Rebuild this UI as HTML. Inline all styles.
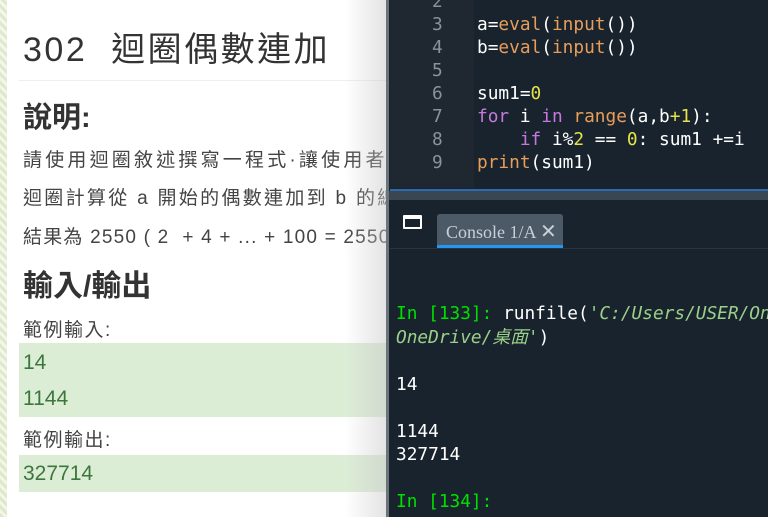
<!DOCTYPE html>
<html><head><meta charset="utf-8"><style>
*{margin:0;padding:0;box-sizing:border-box}
body{width:768px;height:517px;overflow:hidden;position:relative;background:#fff;font-family:"Liberation Sans","Noto Sans CJK TC",sans-serif}
.stripe{position:absolute;left:0;top:0;width:7px;height:517px;background:repeating-linear-gradient(45deg,#dfe8c8 0 3px,#f3f6ea 3px 6px);}
.t{position:absolute;white-space:nowrap;overflow:hidden}
.shadow{position:absolute;left:345px;top:0;width:41px;height:517px;background:linear-gradient(90deg,rgba(255,255,255,0),rgba(200,200,200,.5));}
.green{position:absolute;left:19px;width:367px;background:#dcedd6}
.right{position:absolute;left:386px;top:0;width:382px;height:517px;background:#19232d}
.mono{font-family:"DejaVu Sans Mono","Liberation Mono",monospace;font-size:17.8px;white-space:pre;position:absolute}
</style></head><body>
<div class="stripe"></div>
<div class="t" style="left:23px;top:22px;font-size:34px;color:#333;letter-spacing:2.5px">302&nbsp; 迴圈偶數連加</div>
<div style="position:absolute;left:19px;top:80px;width:367px;height:1px;background:#eee"></div>
<div class="t" style="left:23px;top:94px;font-size:29px;font-weight:bold;color:#333">說明:</div>
<div class="t" style="left:23px;top:145px;width:363px;font-size:19px;color:#444;letter-spacing:3.2px">請使用迴圈敘述撰寫一程式·讓使用者</div>
<div class="t" style="left:23px;top:183px;width:363px;font-size:19px;color:#444;letter-spacing:2.3px">迴圈計算從 a 開始的偶數連加到 b 的總</div>
<div class="t" style="left:23px;top:222px;width:363px;font-size:19px;color:#444;letter-spacing:1.2px">結果為 2550 ( 2&nbsp; + 4 + ... + 100 = 2550</div>
<div class="t" style="left:23px;top:261px;font-size:30px;font-weight:bold;color:#333">輸入/輸出</div>
<div class="t" style="left:23px;top:315px;font-size:19px;color:#444;letter-spacing:1.5px">範例輸入:</div>
<div class="green" style="top:343px;height:74px"></div>
<div class="t" style="left:23px;top:351px;font-size:21px;color:#3c763d">14</div>
<div class="t" style="left:23px;top:387px;font-size:21px;color:#3c763d">1144</div>
<div class="t" style="left:23px;top:425px;font-size:19px;color:#444;letter-spacing:1.5px">範例輸出:</div>
<div class="green" style="top:455px;height:37px"></div>
<div class="t" style="left:23px;top:462px;font-size:21px;color:#3c763d">327714</div>
<div class="shadow"></div>
<div class="right">
 <div style="position:absolute;left:0;top:0;width:3px;height:517px;background:#6b737b"></div>
 <div style="position:absolute;left:4px;top:0;width:84px;height:188px;background:#1f2731"></div>
 <div style="position:absolute;left:4px;top:189px;width:378px;height:2px;background:#2b6cb0"></div>
 <div style="position:absolute;left:3px;top:191px;width:379px;height:9px;background:#3a4652"></div>
 <div class="mono" style="left:46px;top:-10px;color:#8a939c;line-height:23px">2
3
4
5
6
7
8
9</div>
 <div class="mono" style="left:91px;top:13px;color:#fff;line-height:23px">a=<span style="color:#e89e5a">eval</span>(<span style="color:#e89e5a">input</span>())
b=<span style="color:#e89e5a">eval</span>(<span style="color:#e89e5a">input</span>())

sum1=<span style="color:#e5e34a">0</span>
<span style="color:#c678dd">for</span> i <span style="color:#c678dd">in</span> <span style="color:#e89e5a">range</span>(a,b<span style="color:#e5e34a">+1</span>):
    <span style="color:#c678dd">if</span> i%<span style="color:#e5e34a">2</span> == <span style="color:#e5e34a">0</span>: sum1 +=i
<span style="color:#e89e5a">print</span>(sum1)</div>
 <div style="position:absolute;left:17px;top:215px;width:19px;height:14px;border:2px solid #fff;border-top-width:4px;border-radius:1px"></div>
 <div style="position:absolute;left:51px;top:214px;width:126px;height:34px;background:#4c5a68;border-radius:3px 3px 0 0;border-bottom:3px solid #2196f3"></div>
 <div class="t" style="left:60px;top:219px;font-family:'Liberation Serif',serif;font-size:18px;color:#c8d0d8">Console 1/A <span style="font-family:'Liberation Sans';font-size:20px">✕</span></div>
 <div style="position:absolute;left:4px;top:248px;width:378px;height:269px;background:#19232d;border-top:1px solid #2a3540"></div>
 <div class="mono" style="left:10px;top:302px;color:#fff;line-height:23.5px"><span style="color:#00e000">In [133]:</span> runfile(<i style="color:#9ad08a">'C:/Users/USER/On</i>
<i style="color:#9ad08a">OneDrive/桌面'</i>)

14

1144
327714

<span style="color:#00e000">In [134]:</span></div>
</div>
</body></html>
